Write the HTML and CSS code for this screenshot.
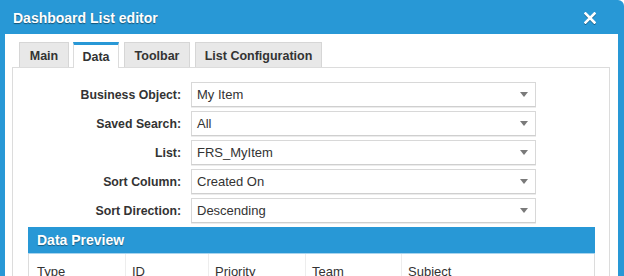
FILE: index.html
```html
<!DOCTYPE html>
<html>
<head>
<meta charset="utf-8">
<link rel="stylesheet" href="styles.css">
</head>
<body>
<div class="dialog">
  <div class="titlebar">
    <span class="title">Dashboard List editor</span>
    <svg class="close" width="12" height="12" viewBox="0 0 12 12"><path d="M1.5 1.5 L10.5 10.5 M10.5 1.5 L1.5 10.5" stroke="#fff" stroke-width="2.6" stroke-linecap="square"/></svg>
  </div>
  <div class="content">
    <ul class="tabs">
      <li class="tab tab-main">Main</li>
      <li class="tab tab-data active">Data</li>
      <li class="tab tab-toolbar">Toolbar</li>
      <li class="tab tab-list">List Configuration</li>
    </ul>
    <div class="panel">
      <div class="form">
        <label class="lbl">Business Object:</label>
        <div class="select"><span>My Item</span><i class="arrow"></i></div>
        <label class="lbl">Saved Search:</label>
        <div class="select"><span>All</span><i class="arrow"></i></div>
        <label class="lbl">List:</label>
        <div class="select"><span>FRS_MyItem</span><i class="arrow"></i></div>
        <label class="lbl">Sort Column:</label>
        <div class="select"><span>Created On</span><i class="arrow"></i></div>
        <label class="lbl">Sort Direction:</label>
        <div class="select"><span>Descending</span><i class="arrow"></i></div>
      </div>
      <div class="preview">
        <div class="preview-head">Data Preview</div>
        <div class="preview-table">
          <div class="col c1">Type</div>
          <div class="col c2">ID</div>
          <div class="col c3">Priority</div>
          <div class="col c4">Team</div>
          <div class="col c5">Subject</div>
        </div>
      </div>
    </div>
  </div>
</div>
</body>
</html>
```

FILE: styles.css
```css
html, body {
  margin: 0;
  padding: 0;
  height: 100%;
  overflow: hidden;
}
body {
  background: #ffffff;
  font-family: "Liberation Sans", Arial, sans-serif;
  color: #333;
}
.dialog {
  width: 624px;
  height: 276px;
  background: #2898d6;
  border-top-right-radius: 6px;
  display: flex;
  flex-direction: column;
}
.titlebar {
  height: 34px;
  flex: none;
  display: flex;
  align-items: center;
  justify-content: space-between;
  padding: 0 28px 0 13px;
  box-sizing: border-box;
}
.title {
  color: #fff;
  font-weight: bold;
  font-size: 14px;
  text-shadow: 0 1px 1px rgba(0,0,0,0.45);
  margin-top: 1px;
}
.close {
  display: block;
  filter: drop-shadow(0 1px 0 rgba(0,0,0,0.35));
  margin-top: 2px;
}
.content {
  flex: 1;
  background: #fff;
  margin: 0 6px 0 5px;
  padding: 8px 8px 0 7px;
  box-sizing: border-box;
  overflow: hidden;
}
.tabs {
  list-style: none;
  margin: 0;
  padding: 0 0 0 7px;
  display: flex;
  height: 25px;
  position: relative;
  z-index: 1;
}
.tab {
  box-sizing: border-box;
  height: 25px;
  border: 1px solid #d6d6d6;
  border-bottom: none;
  background: #e8e8e8;
  font-size: 12.5px;
  font-weight: bold;
  color: #333;
  display: flex;
  align-items: center;
  justify-content: center;
  padding-top: 2px;
}
.tab-main { width: 50px; margin-right: 4px; }
.tab-data { width: 46px; margin-right: 5px; }
.tab-toolbar { width: 66px; margin-right: 5px; }
.tab-list { width: 127px; }
.tab.active {
  background: #fff;
  border-top: 3px solid #2898d6;
  border-left-color: #dcdcdc;
  border-right-color: #dcdcdc;
  height: 26px;
  padding-top: 0;
}
.panel {
  border: 1px solid #dcdcdc;
  border-bottom: none;
  height: 300px;
  padding: 14px 14px 0 0;
  box-sizing: border-box;
}
.form {
  display: grid;
  grid-template-columns: 168px 345px;
  column-gap: 10px;
  row-gap: 4px;
  align-items: center;
}
.lbl {
  text-align: right;
  font-size: 12.3px;
  font-weight: bold;
  color: #333;
}
.select {
  box-sizing: border-box;
  height: 25px;
  border: 1px solid #d8d8d8;
  border-bottom-color: #cfcfcf;
  box-shadow: 0 1px 0 #ececec;
  display: flex;
  align-items: center;
  justify-content: space-between;
  padding: 0 6px 0 5px;
  font-size: 13px;
  color: #333;
}
.arrow {
  width: 0;
  height: 0;
  border-left: 4px solid transparent;
  border-right: 4px solid transparent;
  border-top: 5px solid #7a7a7a;
  margin-right: 1px;
}
.preview {
  margin: 4px 0 0 15px;
}
.preview-head {
  height: 27px;
  background: #2898d6;
  color: #fff;
  font-size: 14px;
  font-weight: bold;
  text-shadow: 0 1px 1px rgba(0,0,0,0.4);
  display: flex;
  align-items: center;
  padding-left: 9px;
  border-bottom: 1px solid #a8d4ee;
  box-sizing: border-box;
}
.preview-table {
  display: grid;
  grid-template-columns: 96px 83px 97px 96px 1fr;
  border-left: 1px solid #dcdcdc;
  border-right: 1px solid #dcdcdc;
  height: 40px;
}
.col {
  font-size: 13px;
  color: #333;
  padding: 10px 0 0 6px;
  border-left: 1px solid #ededed;
}
.c1 { border-left: none; padding-left: 8px; }
```
